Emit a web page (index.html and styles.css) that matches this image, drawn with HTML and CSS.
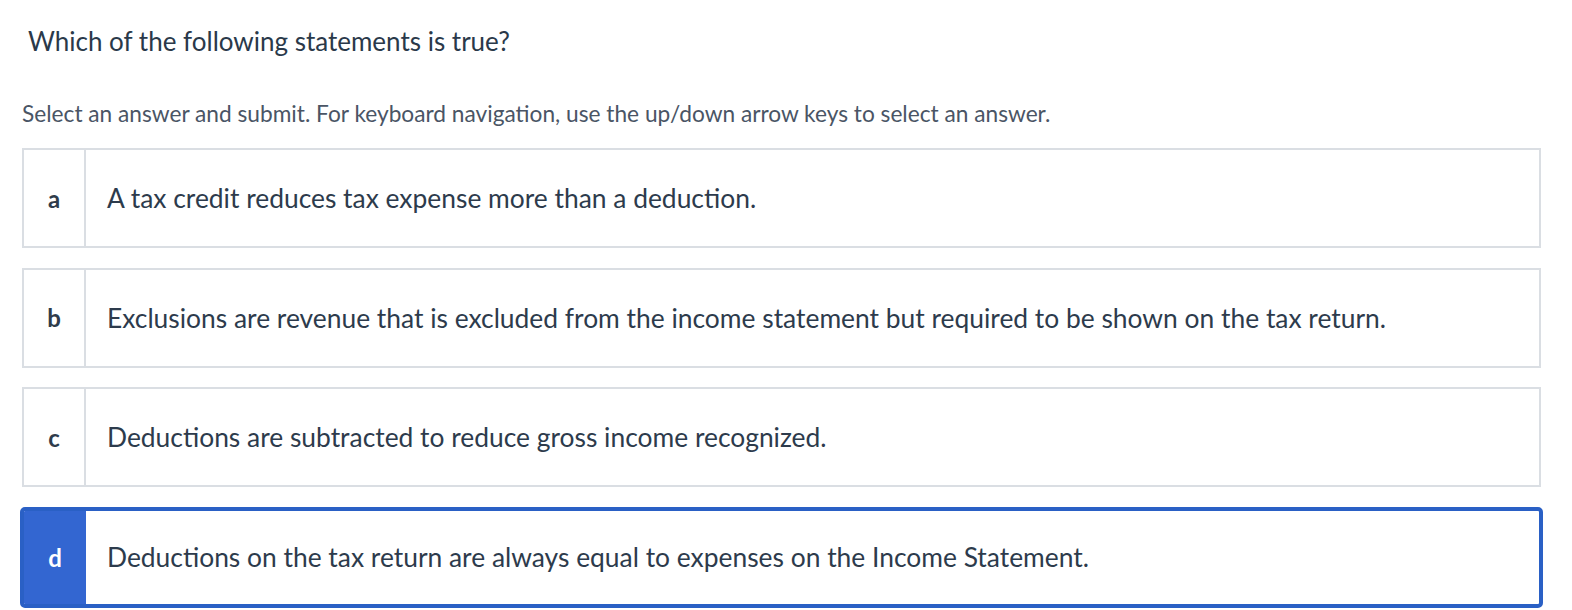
FILE: index.html
```html
<!DOCTYPE html>
<html>
<head>
<meta charset="utf-8">
<link rel="stylesheet" href="styles.css">
</head>
<body>
<div class="page">
  <h1 class="question">Which of the following statements is true?</h1>
  <p class="hint">Select an answer and submit. For keyboard navigation, use the up/down arrow keys to select an answer.</p>
  <div class="options">
    <div class="option"><div class="letter">a</div><div class="text">A tax credit reduces tax expense more than a deduction.</div></div>
    <div class="option"><div class="letter">b</div><div class="text">Exclusions are revenue that is excluded from the income statement but required to be shown on the tax return.</div></div>
    <div class="option"><div class="letter">c</div><div class="text">Deductions are subtracted to reduce gross income recognized.</div></div>
    <div class="option selected"><div class="letter">d</div><div class="text">Deductions on the tax return are always equal to expenses on the Income Statement.</div></div>
  </div>
</div>
</body>
</html>
```
FILE: styles.css
```css
html, body { margin: 0; padding: 0; background: #fff; }
body { font-family: "Lato", "Open Sans", sans-serif; color: #2d3b4c; }
.page { padding: 0 31px 0 22px; }
.question { margin: 0; padding: 26px 0 0 6px; font-size: 26px; font-weight: 400; line-height: 30px; color: #2a394a; }
.hint { margin: 43px 0 0; font-size: 22.7px; line-height: 30px; color: #4a5565; }
.options { margin-top: 19px; display: flex; flex-direction: column; gap: 19.5px; }
.option { display: flex; align-items: stretch; height: 100px; box-sizing: border-box; border: 2px solid #dadee3; background: #fff; }
.letter { width: 60px; flex: none; border-right: 2px solid #dadee3; display: flex; align-items: center; justify-content: center; font-size: 24px; font-weight: 700; color: #2f3c4b; }
.text { display: flex; align-items: center; padding-left: 21px; font-size: 26.4px; color: #2d3b4c; }
.option.selected { height: 101.5px; margin: 0 -2px; border: 4px solid #2a60c5; border-radius: 5px; overflow: hidden; }
.option.selected .letter { width: 62px; border-right: none; background: #3366d1; color: #fff; }
.option.selected .text { padding-left: 21px; }
```
